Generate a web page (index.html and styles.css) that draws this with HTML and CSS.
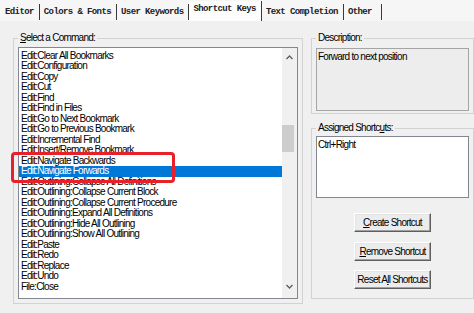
FILE: index.html
```html
<!DOCTYPE html>
<html lang="en">
<head>
  <meta charset="UTF-8">
  <meta name="viewport" content="width=device-width, initial-scale=1.0">
  <title>Shortcut Keys</title>
  <link rel="stylesheet" href="styles.css">
</head>
<body>

<div class="tabs">
  <span class="tab">Editor</span>
  <span class="tab">Colors &amp; Fonts</span>
  <span class="tab">User Keywords</span>
  <span class="tab active">Shortcut Keys</span>
  <span class="tab">Text Completion</span>
  <span class="tab last">Other</span>
</div>

<div class="page">
  <div class="group commands">
    <span class="legend"><u>S</u>elect a Command:</span>
    <div class="listbox">
      <ul class="items">
        <li>Edit:Clear All Bookmarks</li>
        <li>Edit:Configuration</li>
        <li>Edit:Copy</li>
        <li>Edit:Cut</li>
        <li>Edit:Find</li>
        <li>Edit:Find in Files</li>
        <li>Edit:Go to Next Bookmark</li>
        <li>Edit:Go to Previous Bookmark</li>
        <li>Edit:Incremental Find</li>
        <li>Edit:Insert/Remove Bookmark</li>
        <li>Edit:Navigate Backwards</li>
        <li class="selected">Edit:Navigate Forwards</li>
        <li>Edit:Outlining:Collapse All Definitions</li>
        <li>Edit:Outlining:Collapse Current Block</li>
        <li>Edit:Outlining:Collapse Current Procedure</li>
        <li>Edit:Outlining:Expand All Definitions</li>
        <li>Edit:Outlining:Hide All Outlining</li>
        <li>Edit:Outlining:Show All Outlining</li>
        <li>Edit:Paste</li>
        <li>Edit:Redo</li>
        <li>Edit:Replace</li>
        <li>Edit:Undo</li>
        <li>File:Close</li>
      </ul>
      <div class="scrollbar">
        <svg class="arrow up" width="15" height="17" viewBox="0 0 15 17">
          <polyline points="4.5,11 7.5,8 10.5,11" fill="none" stroke="#606060" stroke-width="1.4"/>
        </svg>
        <div class="track"><div class="thumb"></div></div>
        <svg class="arrow down" width="15" height="17" viewBox="0 0 15 17">
          <polyline points="4.5,4 7.5,7 10.5,4" fill="none" stroke="#606060" stroke-width="1.4"/>
        </svg>
      </div>
    </div>
  </div>

  <div class="side">
    <div class="group desc">
      <span class="legend">Description:</span>
      <div class="descbox">Forward to next position</div>
    </div>
    <div class="group assigned">
      <span class="legend">Assigned Shortc<u>u</u>ts:</span>
      <div class="keys">Ctrl+Right</div>
      <div class="buttons">
        <button type="button"><u>C</u>reate Shortcut</button>
        <button type="button"><u>R</u>emove Shortcut</button>
        <button type="button">Reset A<u>l</u>l Shortcuts</button>
      </div>
    </div>
  </div>

  <!-- annotation drawn over the list -->
  <div class="callout"></div>
</div>

</body>
</html>
```

FILE: styles.css
```css
:root {
  --panel: #f0f0f0;
  --group-line: #d2d2d2;
  --list-border: #828790;
  --select: #0078d7;
  --callout: #e8202a;
}

body {
  margin: 0;
  width: 474px;
  height: 313px;
  overflow: hidden;
  background-color: var(--panel);
  font-family: "Liberation Sans", Arial, sans-serif;
  font-size: 10px;
  letter-spacing: -0.75px;
  color: #000;
}

u {
  text-decoration-thickness: 1px;
  text-underline-offset: 1px;
}

/* tab strip */
.tabs {
  display: flex;
  align-items: flex-end;
  height: 21px;
  padding-left: 1px;
  background-color: #f6f6f6;
  font-family: "Liberation Mono", monospace;
  font-size: 9px;
  font-weight: bold;
  letter-spacing: -0.6px;
}

.tab {
  height: 16px;
  line-height: 16px;
  margin-bottom: 1px;
  padding: 0 5px 0 4px;
  border-right: 1px solid #3a3a3a;
  white-space: nowrap;
  color: #222;
}

.tab.active {
  height: 20px;
  line-height: 17px;
  margin-bottom: 0;
  padding-bottom: 3px;
  box-sizing: border-box;
  background-color: #fdfdfd;
}

.tab.last {
  padding-right: 9px;
}

/* main area */
.page {
  position: relative;
  display: flex;
  gap: 8px;
  height: 292px;
  padding: 17px 0 0 13px;
  box-sizing: border-box;
}

.group {
  box-sizing: border-box;
  border: 1px solid var(--group-line);
  padding: 0 4px;
}

.legend {
  display: block;
  width: fit-content;
  height: 12px;
  line-height: 12px;
  margin: -7px 0 0 0;
  padding: 0 2px;
  background-color: var(--panel);
}

.commands {
  width: 290px;
  height: 266px;
}

.listbox {
  display: flex;
  height: 252px;
  margin-top: 3px;
  box-sizing: border-box;
  border: 1px solid var(--list-border);
  background-color: #fff;
}

.items {
  flex: 1;
  margin: 0;
  padding: 2.5px 0 0;
  list-style: none;
  overflow: hidden;
}

.items li {
  height: 10.5px;
  line-height: 10.5px;
  padding-left: 2px;
  white-space: nowrap;
}

.items li.selected {
  background-color: var(--select);
  color: #fff;
}

.scrollbar {
  display: flex;
  flex-direction: column;
  width: 15px;
  background-color: var(--panel);
}

.arrow {
  display: block;
}

.track {
  flex: 1;
}

.thumb {
  width: 12px;
  height: 27px;
  margin: 60px 0 0 0;
  background-color: #cdcdcd;
}

/* right column */
.side {
  display: flex;
  flex-direction: column;
  gap: 14px;
  width: 163px;
}

.desc {
  height: 76px;
}

.descbox {
  height: 63px;
  margin-top: 4px;
  box-sizing: border-box;
  padding: 2px 1px;
  line-height: 12px;
  border: 1px solid #a5a5a5;
  background-color: #ededed;
}

.assigned {
  height: 171px;
}

.keys {
  height: 62px;
  margin-top: 2px;
  box-sizing: border-box;
  padding: 2px 1px;
  line-height: 12px;
  border: 1px solid var(--list-border);
  background-color: #fff;
}

.buttons {
  display: flex;
  flex-direction: column;
  align-items: center;
  gap: 9.5px;
  margin-top: 15px;
}

button {
  width: 77px;
  height: 19px;
  padding: 0;
  font: inherit;
  letter-spacing: inherit;
  line-height: 17px;
  white-space: nowrap;
  color: #000;
  background-color: #ececec;
  border: 1px solid;
  border-color: #fff #5e5e5e #5e5e5e #fff;
  box-shadow: inset -1px -1px #a0a0a0, inset 1px 1px #e4e4e4;
}

.callout {
  position: absolute;
  left: 11px;
  top: 131px;
  width: 164px;
  height: 31px;
  box-sizing: border-box;
  border: 3px solid var(--callout);
  border-radius: 4px;
}
```
